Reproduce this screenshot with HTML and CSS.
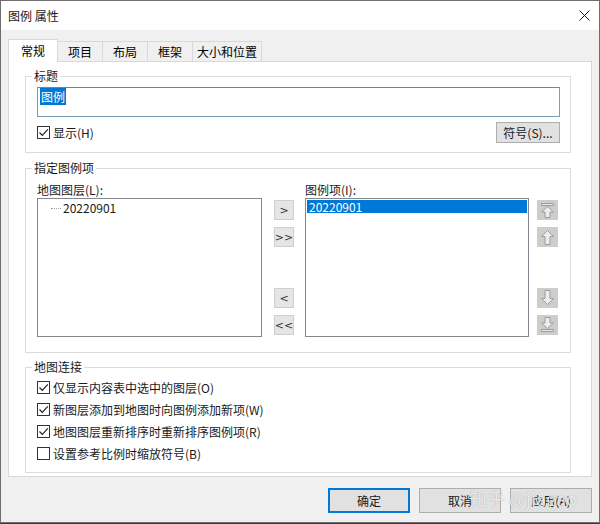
FILE: index.html
```html
<!DOCTYPE html>
<html lang="zh-CN">

<head>
    <meta charset="UTF-8">
    <title>图例 属性</title>
    <link rel="stylesheet" href="styles.css">
</head>

<body>
    <div class="window">
        <div class="titlebar">
            <span class="title">图例 属性</span>
            <svg class="close" width="11" height="11" viewBox="0 0 11 11">
                <path d="M0.5 0.5 L10.5 10.5 M10.5 0.5 L0.5 10.5" stroke="#1a1a1a" stroke-width="1" fill="none" />
            </svg>
        </div>

        <div class="content">
            <div class="tabs">
                <div class="tab active">常规</div>
                <div class="tab">项目</div>
                <div class="tab">布局</div>
                <div class="tab">框架</div>
                <div class="tab tab-wide">大小和位置</div>
            </div>

            <div class="panel">
                <!-- 标题 -->
                <fieldset class="group group-title">
                    <legend>标题</legend>
                    <div class="textbox"><span class="sel">图例</span></div>
                    <div class="title-row">
                        <label class="check"><span class="box"><svg width="11" height="11" viewBox="0 0 11 11"><path d="M1.5 5.5 L4.3 8.3 L9.8 2.3" stroke="#222" stroke-width="1.2" fill="none" /></svg></span>显示(H)</label>
                        <button class="btn btn-symbol">符号(S)...</button>
                    </div>
                </fieldset>

                <!-- 指定图例项 -->
                <fieldset class="group group-items">
                    <legend>指定图例项</legend>
                    <div class="items">
                        <div class="list-col list-left">
                            <div class="list-label">地图图层(L):</div>
                            <div class="list">
                                <div class="tree-item"><span class="dots"></span>20220901</div>
                            </div>
                        </div>

                        <div class="side-btns move-btns">
                            <button class="sbtn">&gt;</button>
                            <button class="sbtn">&gt;&gt;</button>
                            <button class="sbtn sbtn-low">&lt;</button>
                            <button class="sbtn">&lt;&lt;</button>
                        </div>

                        <div class="list-col list-right">
                            <div class="list-label">图例项(I):</div>
                            <div class="list">
                                <div class="list-item selected">20220901</div>
                            </div>
                        </div>

                        <div class="side-btns order-btns">
                            <button class="sbtn disabled">
                                <svg width="19" height="18" viewBox="0 0 19 18"><path d="M3.5 2.5 H15.5 V4.5 H3.5 Z M9.5 5.5 L15.5 11 H12 V16.5 H7 V11 H3.5 Z" fill="#ececec" stroke="#9c9c9c" stroke-width="1" /></svg>
                            </button>
                            <button class="sbtn disabled">
                                <svg width="19" height="18" viewBox="0 0 19 18"><path d="M9.5 2.5 L15.5 8.5 H12 V16.5 H7 V8.5 H3.5 Z" fill="#ececec" stroke="#9c9c9c" stroke-width="1" /></svg>
                            </button>
                            <button class="sbtn sbtn-low disabled">
                                <svg width="19" height="18" viewBox="0 0 19 18"><path d="M9.5 15.5 L15.5 9.5 H12 V1.5 H7 V9.5 H3.5 Z" fill="#ececec" stroke="#9c9c9c" stroke-width="1" /></svg>
                            </button>
                            <button class="sbtn disabled">
                                <svg width="19" height="18" viewBox="0 0 19 18"><path d="M3.5 13.5 H15.5 V15.5 H3.5 Z M9.5 12.5 L15.5 7 H12 V1.5 H7 V7 H3.5 Z" fill="#ececec" stroke="#9c9c9c" stroke-width="1" /></svg>
                            </button>
                        </div>
                    </div>
                </fieldset>

                <!-- 地图连接 -->
                <fieldset class="group group-link">
                    <legend>地图连接</legend>
                    <label class="check check-row"><span class="box"><svg width="11" height="11" viewBox="0 0 11 11"><path d="M1.5 5.5 L4.3 8.3 L9.8 2.3" stroke="#222" stroke-width="1.2" fill="none" /></svg></span>仅显示内容表中选中的图层(O)</label>
                    <label class="check check-row"><span class="box"><svg width="11" height="11" viewBox="0 0 11 11"><path d="M1.5 5.5 L4.3 8.3 L9.8 2.3" stroke="#222" stroke-width="1.2" fill="none" /></svg></span>新图层添加到地图时向图例添加新项(W)</label>
                    <label class="check check-row"><span class="box"><svg width="11" height="11" viewBox="0 0 11 11"><path d="M1.5 5.5 L4.3 8.3 L9.8 2.3" stroke="#222" stroke-width="1.2" fill="none" /></svg></span>地图图层重新排序时重新排序图例项(R)</label>
                    <label class="check check-row"><span class="box"></span>设置参考比例时缩放符号(B)</label>
                </fieldset>
            </div>

            <div class="footer">
                <button class="btn btn-dlg btn-default">确定</button>
                <button class="btn btn-dlg">取消</button>
                <button class="btn btn-dlg">应用(A)</button>
                <span class="watermark">知乎 @jiagao</span>
            </div>
        </div>
    </div>
</body>

</html>
```

FILE: styles.css
```css
/* dialog window */
body {
    margin: 0;
    background-color: #3b3b3b;
    font-family: "Noto Sans CJK SC", "Microsoft YaHei", sans-serif;
    font-size: 12px;
    color: #000;
}

.window {
    width: 600px;
    height: 523px;
    box-sizing: border-box;
    border: 1px solid #6e6e6e;
    background-color: #f0f0f0;
    display: flex;
    flex-direction: column;
}

.titlebar {
    height: 29px;
    flex: none;
    background-color: #fff;
    display: flex;
    align-items: center;
    justify-content: space-between;
    padding: 0 9px 0 7px;
}

.title {
    line-height: 16px;
    color: #1a1a1a;
}

.content {
    flex: 1;
    padding: 9px 7px 0 7px;
    position: relative;
}

/* tabs */
.tabs {
    display: flex;
    align-items: flex-end;
    height: 22px;
}

.tab {
    height: 19px;
    line-height: 19px;
    padding: 0 10px;
    border: 1px solid #d9d9d9;
    border-bottom: none;
    margin-left: -1px;
    background-color: #f0f0f0;
}

.tab.active {
    height: 22px;
    line-height: 22px;
    margin-left: 0;
    margin-bottom: -1px;
    padding: 0 12px;
    background-color: #fff;
    position: relative;
    z-index: 1;
}

.tab-wide {
    padding: 0 4px;
}

.panel {
    height: 416px;
    box-sizing: border-box;
    background-color: #fff;
    border: 1px solid #d9d9d9;
    padding: 0 20px 0 16px;
}

/* group boxes */
.group {
    margin: 6px 0 0;
    border: 1px solid #dcdcdc;
    padding: 3px 10px 10px 11px;
    min-width: 0;
}

.group legend {
    padding: 0 2px;
    margin-left: -5px;
    line-height: 16px;
    color: #1a1a1a;
}

.group-items {
    margin-top: 7px;
    padding-top: 6px;
}

.group-link {
    padding-top: 1px;
    padding-bottom: 8px;
}

.textbox {
    height: 30px;
    box-sizing: border-box;
    border: 1px solid #7a9eb6;
    border-top-color: #5e8aa6;
    padding: 1px 2px;
    line-height: 15px;
}

.sel {
    background-color: #0078d7;
    color: #fff;
    padding: 0 1px;
}

.title-row {
    margin-top: 5px;
    height: 20px;
    display: flex;
    align-items: center;
    justify-content: space-between;
}

.check {
    display: flex;
    align-items: center;
    color: #1a1a1a;
}

.check-row {
    height: 22px;
}

.box {
    width: 13px;
    height: 13px;
    box-sizing: border-box;
    border: 1px solid #333;
    background-color: #fff;
    margin-right: 3px;
    display: flex;
    align-items: center;
    justify-content: center;
}

.btn {
    font-family: inherit;
    font-size: 12px;
    color: #1a1a1a;
    background-color: #e1e1e1;
    border: 1px solid #adadad;
    padding: 0;
    margin: 0;
}

.btn-symbol {
    width: 64px;
    height: 21px;
}

/* legend items */
.items {
    display: flex;
}

.list-col {
    display: flex;
    flex-direction: column;
}

.list-left {
    width: 225px;
}

.list-right {
    width: 224px;
}

.list-label {
    line-height: 16px;
    color: #1a1a1a;
}

.list {
    height: 139px;
    box-sizing: border-box;
    border: 1px solid #828790;
    background-color: #fff;
    padding: 1px;
}

.tree-item {
    display: flex;
    align-items: center;
    line-height: 16px;
    padding-left: 12px;
    color: #1a1a1a;
}

.dots {
    width: 10px;
    border-top: 1px dotted #a0a0a0;
    margin-right: 2px;
}

.list-item {
    line-height: 13px;
    padding-left: 2px;
}

.list-item.selected {
    background-color: #0078d7;
    color: #fff;
}

.side-btns {
    display: flex;
    flex-direction: column;
    padding-top: 18px;
}

.move-btns {
    margin: 0 11px 0 12px;
}

.order-btns {
    margin-left: 8px;
}

.sbtn {
    width: 20px;
    height: 20px;
    margin-bottom: 7px;
    padding: 0;
    font-family: "DejaVu Sans", sans-serif;
    font-size: 11px;
    color: #333;
    background-color: #e5e5e5;
    border: 1px solid #cfcfcf;
    display: flex;
    align-items: center;
    justify-content: center;
}

.order-btns .sbtn {
    width: 21px;
}

.sbtn.disabled {
    background-color: #cdcdcd;
    border-color: #cdcdcd;
}

.sbtn-low {
    margin-top: 34px;
}

/* dialog buttons */
.footer {
    display: flex;
    justify-content: flex-end;
    margin-top: 11px;
}

.btn-dlg {
    width: 82px;
    height: 25px;
    margin-left: 9px;
}

.btn-default {
    border: 2px solid #0078d7;
}

.watermark {
    position: absolute;
    right: 22px;
    bottom: 13px;
    font-size: 18px;
    line-height: 22px;
    color: rgba(255, 255, 255, 0.8);
    text-shadow: 0 0 1px rgba(0, 0, 0, 0.35);
    pointer-events: none;
}
```
